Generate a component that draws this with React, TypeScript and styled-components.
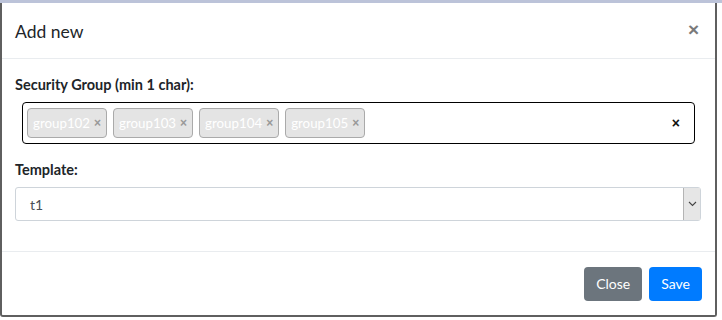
import styled, { createGlobalStyle } from 'styled-components';

const GlobalStyle = createGlobalStyle`
  html, body {
    margin: 0;
    padding: 0;
    background: #ffffff;
  }
  body {
    font-family: Lato, "Open Sans", "Liberation Sans", sans-serif;
    color: #212529;
  }
`;

const Backdrop = styled.div`
  width: 722px;
  height: 320px;
  border-top: 3px solid #bcc3d9;
  box-sizing: border-box;
  background: #ffffff;
`;

const Modal = styled.div`
  width: 717px;
  height: 314px;
  box-sizing: border-box;
  border-left: 2px solid #5f5f5f;
  border-right: 2px solid #5f5f5f;
  border-bottom: 2px solid #5f5f5f;
  border-radius: 0 0 3px 3px;
  display: flex;
  flex-direction: column;
`;

const Header = styled.div`
  height: 56px;
  box-sizing: border-box;
  border-bottom: 1px solid #e9ecef;
  display: flex;
  align-items: center;
  justify-content: space-between;
  padding: 0 16px 0 13px;
`;

const Title = styled.h5`
  margin: 0;
  font-size: 17.5px;
  font-weight: 400;
  color: #212529;
  margin-top: 1px;
`;

const CloseX = styled.button`
  border: 0;
  background: none;
  padding: 0;
  font-family: "Liberation Sans", sans-serif;
  font-size: 19px;
  font-weight: 700;
  line-height: 1;
  color: #7a7a7a;
  margin-top: -2px;
`;

const Body = styled.div`
  flex: 1;
  padding: 15px 13px 0 13px;
`;

const Group = styled.div`
  margin-bottom: 15px;
`;

const Label = styled.label`
  display: block;
  font-size: 14.5px;
  font-weight: 700;
  line-height: 21px;
  margin-bottom: 7px;
`;

const TagBox = styled.div`
  margin-left: 7px;
  margin-right: 7px;
  height: 42px;
  box-sizing: border-box;
  border: 1px solid #000;
  border-radius: 4px;
  display: flex;
  align-items: center;
  padding: 0 14px 0 4px;
  gap: 6px;
`;

const Tag = styled.span`
  display: inline-flex;
  align-items: center;
  height: 30px;
  box-sizing: border-box;
  padding: 0 5px 0 5px;
  background: #e4e4e4;
  border: 1px solid #aaaaaa;
  border-radius: 4px;
  color: #ffffff;
  font-size: 13.3px;
  gap: 4px;
`;

const TagRemove = styled.span`
  color: #999999;
  font-family: "Liberation Sans", sans-serif;
  font-weight: 700;
  font-size: 12px;
`;

const ClearAll = styled.span`
  margin-left: auto;
  color: #111;
  font-family: "Liberation Sans", sans-serif;
  font-weight: 700;
  font-size: 14px;
`;

const Select = styled.div`
  height: 34px;
  box-sizing: border-box;
  border: 1px solid #ced4da;
  border-radius: 3px;
  display: flex;
  align-items: stretch;
  font-size: 14px;
  color: #495057;
  margin-right: 1px;
`;

const SelectValue = styled.span`
  flex: 1;
  display: flex;
  align-items: center;
  padding-left: 14px;
`;

const Arrow = styled.span`
  width: 17px;
  box-sizing: border-box;
  background: #e6e6e6;
  border-left: 1px solid #b4b4b4;
  display: flex;
  align-items: center;
  justify-content: center;
`;

const Footer = styled.div`
  height: 64px;
  box-sizing: border-box;
  border-top: 1px solid #e9ecef;
  display: flex;
  align-items: center;
  justify-content: flex-end;
  gap: 7px;
  padding-right: 13px;
`;

const Button = styled.button<{ $variant: 'secondary' | 'primary' }>`
  height: 34px;
  padding: 0 12px;
  border: 0;
  border-radius: 4px;
  font-family: Lato, "Open Sans", sans-serif;
  font-size: 14px;
  color: #ffffff;
  background: ${(p) => (p.$variant === 'primary' ? '#007bff' : '#6c757d')};
`;

const groups = ['group102', 'group103', 'group104', 'group105'];

export default function App() {
  return (
    <>
      <GlobalStyle />
      <Backdrop>
        <Modal>
          <Header>
            <Title>Add new</Title>
            <CloseX>×</CloseX>
          </Header>
          <Body>
            <Group>
              <Label>Security Group (min 1 char):</Label>
              <TagBox>
                {groups.map((g) => (
                  <Tag key={g}>
                    {g}
                    <TagRemove>×</TagRemove>
                  </Tag>
                ))}
                <ClearAll>×</ClearAll>
              </TagBox>
            </Group>
            <Group>
              <Label>Template:</Label>
              <Select>
                <SelectValue>t1</SelectValue>
                <Arrow>
                  <svg width="9" height="6" viewBox="0 0 9 6">
                    <path d="M1 1l3.5 3.5L8 1" fill="none" stroke="#444" strokeWidth="1.1" />
                  </svg>
                </Arrow>
              </Select>
            </Group>
          </Body>
          <Footer>
            <Button $variant="secondary">Close</Button>
            <Button $variant="primary">Save</Button>
          </Footer>
        </Modal>
      </Backdrop>
    </>
  );
}
